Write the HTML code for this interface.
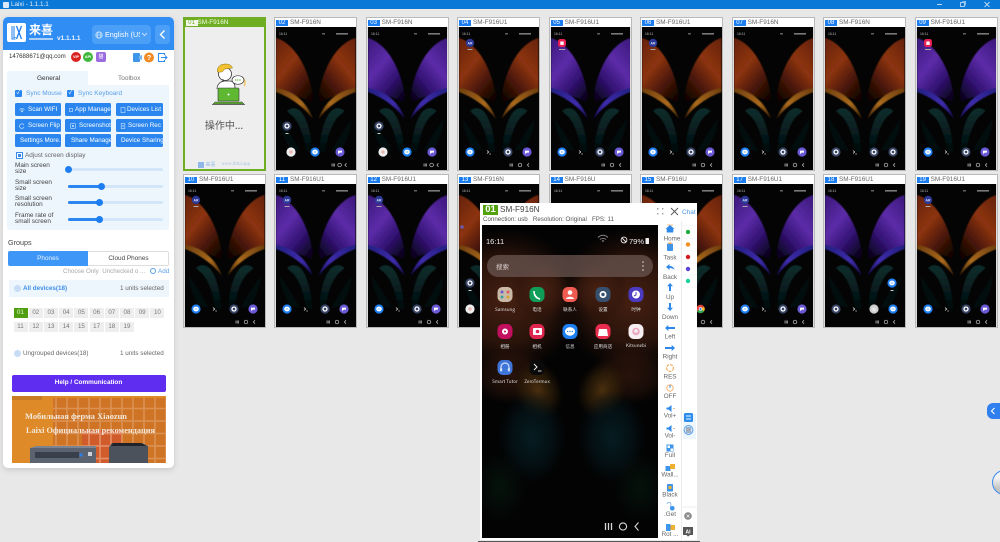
<!DOCTYPE html>
<html lang="en">
<head>
<meta charset="utf-8">
<title>Laixi - 1.1.1.1</title>
<style>
*{box-sizing:border-box;margin:0;padding:0}
html,body{width:1000px;height:542px;overflow:hidden;background:#e9e8e8;font-family:"Liberation Sans","Noto Sans CJK SC",sans-serif}
#root{position:relative;width:1000px;height:542px;overflow:hidden;filter:blur(.25px)}
.a{position:absolute;white-space:nowrap}
.card{position:absolute;width:83px;height:154px;background:#dedddd;border:1px solid #b9b9b9}
.card .h{position:absolute;left:0;top:0;right:0;height:9px;background:#fff;font-size:6.4px;line-height:9px;color:#666;padding-left:15px;white-space:nowrap}
.card .b{position:absolute;left:1px;top:2px;width:12px;height:6px;background:#1b7df0;color:#fff;font-size:6px;line-height:6px;text-align:center}
.card svg{position:absolute;left:1px;top:9px;width:79.5px;height:143px;background:#040404}
.btn{position:absolute;height:13px;background:#2a86ee;color:#fff;font-size:6.3px;line-height:13px;white-space:nowrap;overflow:hidden;border-radius:1.5px}
.btn svg{position:absolute;left:4px;top:3.5px;width:6px;height:6px}
.lb{position:absolute;left:15px;font-size:6.4px;line-height:6.4px;color:#444;width:48px}
.tr{position:absolute;left:68px;width:95px;height:3px;background:#d3e5f9;border-radius:2px}
.fi{position:absolute;left:68px;height:3px;background:#2a86ee;border-radius:2px}
.th{position:absolute;width:7px;height:7px;border-radius:50%;background:#1e7df0}
.ck{position:absolute;width:7px;height:7px;background:#2a86ee;border-radius:1px;color:#fff;font-size:6px;line-height:7px;text-align:center}
.n{position:absolute;width:14px;height:10px;background:#eee;color:#777;font-size:6.2px;line-height:10px;text-align:center}
</style>
</head>
<body>
<div id="root">

<svg width="0" height="0" style="position:absolute">
<defs>
<linearGradient id="lo" x1=".1" y1="0" x2=".8" y2="1"><stop offset="0" stop-color="#6a240c"/><stop offset=".4" stop-color="#8c3412"/><stop offset=".72" stop-color="#4c1808"/><stop offset="1" stop-color="#140502"/></linearGradient>
<linearGradient id="lp" x1=".1" y1="0" x2=".8" y2="1"><stop offset="0" stop-color="#3e1a80"/><stop offset=".4" stop-color="#5c2ca8"/><stop offset=".72" stop-color="#321272"/><stop offset="1" stop-color="#0c0420"/></linearGradient>
<linearGradient id="bo" x1="0" y1="0" x2="1" y2="1"><stop offset="0" stop-color="#6e3e0e"/><stop offset=".6" stop-color="#aa6a1c"/><stop offset="1" stop-color="#3a2006"/></linearGradient>
<linearGradient id="bp" x1="0" y1="0" x2="1" y2="1"><stop offset="0" stop-color="#221f80"/><stop offset=".6" stop-color="#3e2cac"/><stop offset="1" stop-color="#140c50"/></linearGradient>
<linearGradient id="te" x1="0" y1="0" x2="0" y2="1"><stop offset="0" stop-color="#0e2e2c"/><stop offset=".55" stop-color="#071c1e"/><stop offset="1" stop-color="#030707"/></linearGradient>
<filter id="s1" x="-5%" y="-5%" width="110%" height="110%"><feGaussianBlur stdDeviation=".45"/></filter>
<radialGradient id="gb"><stop offset="0" stop-color="#4a2212" stop-opacity=".95"/><stop offset=".6" stop-color="#3a1a0e" stop-opacity=".7"/><stop offset="1" stop-color="#2a120a" stop-opacity="0"/></radialGradient>
<radialGradient id="go"><stop offset="0" stop-color="#523410" stop-opacity=".9"/><stop offset=".6" stop-color="#38240a" stop-opacity=".55"/><stop offset="1" stop-color="#2a1a06" stop-opacity="0"/></radialGradient>
<radialGradient id="gt"><stop offset="0" stop-color="#062026" stop-opacity=".9"/><stop offset=".6" stop-color="#05181e" stop-opacity=".6"/><stop offset="1" stop-color="#04141a" stop-opacity="0"/></radialGradient>
<radialGradient id="gg"><stop offset="0" stop-color="#05180f" stop-opacity=".7"/><stop offset="1" stop-color="#061c12" stop-opacity="0"/></radialGradient>
<pattern id="tile" width="11" height="12.500" patternUnits="userSpaceOnUse"><rect width="11" height="12.500" fill="#dc9152"/><rect x=".8" y=".8" width="9.400" height="10.900" fill="#cf7424"/></pattern>
<pattern id="tile2" width="11" height="12.500" patternUnits="userSpaceOnUse"><rect width="11" height="12.500" fill="#e58f68"/><rect x=".8" y=".8" width="9.400" height="10.900" fill="#d05c2c"/></pattern>
<g id="lf-o"><path d="M0 11C12 14 30 30 37 68L35 75C25 70 10 66 0 61Z" fill="url(#lo)"/><path d="M0 61C14 63 30 72 37 92C28 80 14 70 0 65Z" fill="url(#bo)"/><path d="M11 84C15 80 22 80 26 86C32 94 36 110 36 126L30 124C28 108 22 92 14 87Z" fill="url(#te)"/><path d="M4 92C10 100 20 116 24 124L14 122C8 112 4 102 4 92Z" fill="#061a1a" opacity=".45"/></g>
<g id="lf-p"><path d="M0 11C12 14 30 30 37 68L35 75C25 70 10 66 0 61Z" fill="url(#lp)"/><path d="M0 61C14 63 30 72 37 92C28 80 14 70 0 65Z" fill="url(#bp)"/><path d="M11 84C15 80 22 80 26 86C32 94 36 110 36 126L30 124C28 108 22 92 14 87Z" fill="url(#te)"/><path d="M4 92C10 100 20 116 24 124L14 122C8 112 4 102 4 92Z" fill="#061a1a" opacity=".45"/></g>
<g id="wo" filter="url(#s1)"><use href="#lf-o"/><use href="#lf-o" transform="translate(79.5 0) scale(-1 1)"/></g>
<g id="wp" filter="url(#s1)"><use href="#lf-p"/><use href="#lf-p" transform="translate(79.5 0) scale(-1 1)"/></g>
<g id="st"><text x="3" y="8" font-size="3.400" fill="#bbb" font-family="Liberation Sans">16:11</text><rect x="46" y="6.200" width="3" height="1.200" fill="#777"/><rect x="60" y="6" width="12" height="1.600" fill="#aaa" opacity=".7"/></g>
<g id="nv"><path d="M51 136.500v3M52.200 136.500v3M53.400 136.500v3" stroke="#bbb" stroke-width=".7"/><circle cx="61" cy="138" r="1.800" fill="none" stroke="#ccc" stroke-width=".7"/><path d="M70 136.300l-1.600 1.700 1.600 1.700" fill="none" stroke="#ccc" stroke-width=".7"/></g>
<g id="nw"><path d="M56 136.500v3M57.200 136.500v3M58.400 136.500v3" stroke="#bbb" stroke-width=".7"/><circle cx="63.600" cy="138" r="1.800" fill="none" stroke="#ccc" stroke-width=".7"/><path d="M70.500 136.300l-1.600 1.700 1.600 1.700" fill="none" stroke="#ccc" stroke-width=".7"/></g>
<g id="ib"><circle r="4.600" fill="#1d7ff2"/><ellipse rx="2.800" ry="2.400" fill="#fff"/><path d="M-1.300 0h2.600" stroke="#1d7ff2" stroke-width=".6"/></g>
<g id="is"><circle r="4.600" fill="#3a4668"/><circle r="2" fill="none" stroke="#fff" stroke-width="1.300"/></g>
<g id="ip"><circle r="4.600" fill="#6b5ad6"/><path d="M-2 -1.400h4v2h-2l-2 1.400z" fill="#fff"/></g>
<g id="iw"><circle r="4.600" fill="#eee"/><circle r="1.700" fill="#e9b7b0"/></g>
<g id="ig"><circle r="4.600" fill="#cfcfcf"/><circle r="2" cy=".5" fill="#e4e4e4"/></g>
<g id="it"><path d="M-2 -1.500l1.700 1.500-1.700 1.500" fill="none" stroke="#ddd" stroke-width=".8"/><path d="M.3 2h1.600" stroke="#ddd" stroke-width=".7"/></g>
<g id="ir"><rect x="-4" y="-4" width="8" height="8" rx="2.400" fill="#e81f55"/><rect x="-1.700" y="-1.500" width="3.400" height="3.400" fill="#fff"/><rect x="-3" y="6" width="6" height="1" fill="#aaa"/></g>
<g id="ia"><circle r="4.200" fill="#2a3795"/><text y="1.300" text-anchor="middle" font-size="3.400" font-weight="bold" fill="#d8def8" font-family="Liberation Sans">AR</text><rect x="-2.500" y="6" width="5" height="1" fill="#aaa"/></g>
<g id="il"><rect x="-1.500" y="6" width="3" height="1" fill="#ccc"/></g>
<g id="ic"><circle r="4.200" fill="#e8453c"/><path d="M0 0L-3.600 2.100A4.200 4.200 0 0 0 3.600 2.100Z" fill="#2ea84f"/><path d="M0 0L3.600 2.100A4.200 4.200 0 0 0 3.600 -2.100Z" fill="#f5c11a"/><circle r="1.700" fill="#fff"/><circle r="1.100" fill="#3b82f0"/></g>
</defs>
</svg>

<!-- title bar -->
<div class="a" style="left:0;top:0;width:1000px;height:9px;background:#0a78d6"></div>
<div class="a" style="left:3px;top:1.500px;width:6px;height:6px;background:#dbeafb;border-radius:1px"></div>
<div class="a" style="left:11px;top:1px;font-size:6.300px;line-height:8px;color:#e8f2fc">Laixi - 1.1.1.1</div>
<svg class="a" style="left:930px;top:0" width="70" height="9"><path d="M7 4.500h5" stroke="#e6f0fb" stroke-width=".8"/><rect x="30.500" y="2.500" width="4" height="4" fill="none" stroke="#e6f0fb" stroke-width=".7"/><path d="M32 1.500h3.700v3.700" fill="none" stroke="#e6f0fb" stroke-width=".6"/><path d="M54.500 2l5 5M59.500 2l-5 5" stroke="#e6f0fb" stroke-width=".8"/></svg>

<!-- cards row 1 -->
<div class="card" style="left:182.500px;top:17px;border:2px solid #6fae22;background:#eeeeee">
  <div class="h" style="background:#6fae22;left:-1px;right:-1px;top:-1px;height:9px;color:#f4fbe8;padding-left:14px">SM-F916N</div>
  <div class="b" style="left:1px;top:1px;background:#f2f7ea;color:#6fae22;">01</div>
  <svg style="left:22px;top:40px;width:40px;height:50px;background:none" viewBox="0 0 40 50">
    <path d="M10 30c0-5 4-8 8-8h5c3 0 5 3 5 6v3" fill="#fff" stroke="#333" stroke-width=".8"/>
    <circle cx="18" cy="15" r="6.500" fill="#fff" stroke="#333" stroke-width=".8"/>
    <path d="M10.500 13c-1-5 3-8 8-8 3 0 6 1 7 4-3 0-5 1-8 1-1 2-2 3-4 3-1 0-2 .5-3 0z" fill="#f2c230" stroke="#8a6a10" stroke-width=".5"/>
    <path d="M16 20v3" stroke="#333" stroke-width=".8"/>
    <rect x="11" y="29" width="21" height="13" rx="1" fill="#5fb832" stroke="#333" stroke-width=".6"/>
    <path d="M8 43h27l2 2H6z" fill="#5fb832" stroke="#333" stroke-width=".5"/>
    <path d="M5 45.500h33" stroke="#444" stroke-width=".8"/>
    <circle cx="21.500" cy="35.500" r="1" fill="#fff"/>
    <path d="M37 27c2-3 1-7-2-8" fill="none" stroke="#f2c96a" stroke-width="1.600"/>
    <ellipse cx="31" cy="21" rx="6" ry="4.300" fill="#fff" stroke="#333" stroke-width=".7"/>
    <path d="M28 21h6" stroke="#58b030" stroke-width="1.200" stroke-dasharray="1 .8"/>
  </svg>
  <div class="a" style="left:0;width:79px;top:99px;text-align:center;font-size:10px;line-height:13px;color:#555;font-family:'Noto Sans CJK SC','Liberation Sans',sans-serif">操作中...</div>
  <div class="a" style="left:13px;top:143px;width:6px;height:6px;background:#8fb8e8"></div>
  <div class="a" style="left:21px;top:143px;font-size:5px;line-height:6px;color:#8fb8e8">来喜</div>
  <div class="a" style="left:37px;top:143px;font-size:4.800px;line-height:6px;color:#a9c3e4;font-family:'Liberation Serif',serif">www.lbfol.app</div>
</div>

<div class="card" style="left:274px;top:17px"><div class="h">SM-F916N</div><div class="b">02</div><svg viewBox="0 0 79.5 143"><use href="#wo"/><use href="#st"/><use href="#is" x="11" y="99"/><use href="#il" x="11" y="100"/><use href="#iw" x="15" y="125"/><use href="#ib" x="39" y="125"/><use href="#ip" x="64" y="125"/><use href="#nw"/></svg></div>
<div class="card" style="left:365.600px;top:17px"><div class="h">SM-F916N</div><div class="b">03</div><svg viewBox="0 0 79.5 143"><use href="#wp"/><use href="#st"/><use href="#is" x="11" y="99"/><use href="#il" x="11" y="100"/><use href="#iw" x="15" y="125"/><use href="#ib" x="39" y="125"/><use href="#ip" x="64" y="125"/><use href="#nw"/></svg></div>
<div class="card" style="left:457px;top:17px"><div class="h">SM-F916U1</div><div class="b">04</div><svg viewBox="0 0 79.5 143"><use href="#wo"/><use href="#st"/><use href="#ia" x="11" y="16"/><use href="#ib" x="11" y="125"/><use href="#it" x="30" y="125"/><use href="#is" x="49" y="125"/><use href="#ip" x="68" y="125"/><use href="#nv"/></svg></div>
<div class="card" style="left:548.600px;top:17px"><div class="h">SM-F916U1</div><div class="b">05</div><svg viewBox="0 0 79.5 143"><use href="#wp"/><use href="#st"/><use href="#ir" x="11" y="16"/><use href="#ib" x="11" y="125"/><use href="#it" x="30" y="125"/><use href="#is" x="49" y="125"/><use href="#ip" x="68" y="125"/><use href="#nv"/></svg></div>
<div class="card" style="left:640px;top:17px"><div class="h">SM-F916U1</div><div class="b">06</div><svg viewBox="0 0 79.5 143"><use href="#wo"/><use href="#st"/><use href="#ia" x="11" y="16"/><use href="#ib" x="11" y="125"/><use href="#it" x="30" y="125"/><use href="#is" x="49" y="125"/><use href="#ip" x="68" y="125"/><use href="#nv"/></svg></div>
<div class="card" style="left:731.600px;top:17px"><div class="h">SM-F916N</div><div class="b">07</div><svg viewBox="0 0 79.5 143"><use href="#wo"/><use href="#st"/><use href="#ib" x="11" y="125"/><use href="#it" x="30" y="125"/><use href="#is" x="49" y="125"/><use href="#ip" x="68" y="125"/><use href="#nv"/></svg></div>
<div class="card" style="left:823px;top:17px"><div class="h">SM-F916N</div><div class="b">08</div><svg viewBox="0 0 79.5 143"><use href="#wo"/><use href="#st"/><use href="#is" x="11" y="125"/><use href="#it" x="30" y="125"/><use href="#is" x="49" y="125"/><use href="#is" x="68" y="125"/><use href="#nv"/></svg></div>
<div class="card" style="left:914.600px;top:17px"><div class="h">SM-F916U1</div><div class="b">09</div><svg viewBox="0 0 79.5 143"><use href="#wp"/><use href="#st"/><use href="#ir" x="11" y="16"/><use href="#ib" x="11" y="125"/><use href="#it" x="30" y="125"/><use href="#is" x="49" y="125"/><use href="#ip" x="68" y="125"/><use href="#nv"/></svg></div>

<!-- cards row 2 -->
<div class="card" style="left:183px;top:174px"><div class="h">SM-F916U1</div><div class="b">10</div><svg viewBox="0 0 79.5 143"><use href="#wo"/><use href="#st"/><use href="#ia" x="11" y="16"/><use href="#ib" x="11" y="125"/><use href="#it" x="30" y="125"/><use href="#is" x="49" y="125"/><use href="#ip" x="68" y="125"/><use href="#nv"/></svg></div>
<div class="card" style="left:274px;top:174px"><div class="h">SM-F916U1</div><div class="b">11</div><svg viewBox="0 0 79.5 143"><use href="#wp"/><use href="#st"/><use href="#ia" x="11" y="16"/><use href="#ib" x="11" y="125"/><use href="#it" x="30" y="125"/><use href="#is" x="49" y="125"/><use href="#ip" x="68" y="125"/><use href="#nv"/></svg></div>
<div class="card" style="left:365.600px;top:174px"><div class="h">SM-F916U1</div><div class="b">12</div><svg viewBox="0 0 79.5 143"><use href="#wp"/><use href="#st"/><use href="#ia" x="11" y="16"/><use href="#ib" x="11" y="125"/><use href="#it" x="30" y="125"/><use href="#is" x="49" y="125"/><use href="#ip" x="68" y="125"/><use href="#nv"/></svg></div>
<div class="card" style="left:457px;top:174px"><div class="h">SM-F916N</div><div class="b">13</div><svg viewBox="0 0 79.5 143"><use href="#wo"/><use href="#st"/><circle cx="3" cy="43" r="1.800" fill="#6a5ab0"/><use href="#is" x="11" y="99"/><use href="#il" x="11" y="100"/><use href="#iw" x="11" y="125"/></svg></div>
<div class="card" style="left:548.600px;top:174px"><div class="h">SM-F916U</div><div class="b">14</div><svg viewBox="0 0 79.5 143"><use href="#st"/></svg></div>
<div class="card" style="left:640px;top:174px"><div class="h">SM-F916U</div><div class="b">15</div><svg viewBox="0 0 79.5 143"><use href="#wo"/><use href="#st"/><use href="#ic" x="58.500" y="125"/><use href="#nv"/></svg></div>
<div class="card" style="left:731.600px;top:174px"><div class="h">SM-F916U1</div><div class="b">17</div><svg viewBox="0 0 79.5 143"><use href="#wp"/><use href="#st"/><use href="#ia" x="11" y="16"/><use href="#ib" x="11" y="125"/><use href="#it" x="30" y="125"/><use href="#is" x="49" y="125"/><use href="#ip" x="68" y="125"/><use href="#nv"/></svg></div>
<div class="card" style="left:823px;top:174px"><div class="h">SM-F916U1</div><div class="b">18</div><svg viewBox="0 0 79.5 143"><use href="#wp"/><use href="#st"/><use href="#ib" x="67" y="99"/><use href="#il" x="67" y="100"/><use href="#is" x="11" y="125"/><use href="#it" x="30" y="125"/><use href="#ig" x="49" y="125"/><use href="#ib" x="68" y="125"/><use href="#nv"/></svg></div>
<div class="card" style="left:914.600px;top:174px"><div class="h">SM-F916U1</div><div class="b">19</div><svg viewBox="0 0 79.5 143"><use href="#wo"/><use href="#st"/><use href="#ia" x="11" y="16"/><use href="#ib" x="11" y="125"/><use href="#it" x="30" y="125"/><use href="#is" x="49" y="125"/><use href="#ip" x="68" y="125"/><use href="#nv"/></svg></div>

<!-- sidebar -->
<div class="a" style="left:3px;top:17px;width:171px;height:451px;background:#fff;border-radius:5px;box-shadow:0 2px 6px rgba(120,120,130,.28)"></div>
<div class="a" style="left:3px;top:17px;width:171px;height:33px;background:#2f8df4;border-radius:5px 5px 0 0"></div>
<div class="a" style="left:7px;top:23px;width:19px;height:19px;background:#fff;border-radius:2px"></div>
<svg class="a" style="left:7px;top:23px" width="19" height="19" viewBox="0 0 19 19"><path d="M5 3v13h3.500M7 3v11.500h1.500" fill="none" stroke="#1f7fe8" stroke-width="1"/><path d="M9.500 3l5 13M14.500 3l-5 13" fill="none" stroke="#1f7fe8" stroke-width="1.300"/></svg>
<div class="a" style="left:29px;top:23px;font-size:12px;line-height:14px;font-weight:bold;color:#fff;font-family:'Noto Sans CJK SC',sans-serif">来喜</div>
<div class="a" style="left:29px;top:38px;width:24px;height:1.500px;background:#a9d0fa"></div>
<div class="a" style="left:57px;top:35px;font-size:6.500px;line-height:8px;color:#eaf4ff;font-weight:bold">v1.1.1.1</div>
<div class="a" style="left:92px;top:25px;width:59px;height:19px;background:#4b9ff6;border-radius:4px"></div>
<svg class="a" style="left:95px;top:31px" width="8" height="8" viewBox="0 0 8 8"><circle cx="4" cy="4" r="3.200" fill="none" stroke="#dcecff" stroke-width=".7"/><ellipse cx="4" cy="4" rx="1.400" ry="3.200" fill="none" stroke="#dcecff" stroke-width=".6"/><path d="M1 4h6" stroke="#dcecff" stroke-width=".6"/></svg>
<div class="a" style="left:105px;top:30px;width:35px;overflow:hidden;font-size:7.200px;line-height:10px;color:#fff">English (US)</div>
<svg class="a" style="left:141px;top:32px" width="7" height="5"><path d="M1 1l2.500 2.500L6 1" fill="none" stroke="#dcecff" stroke-width=".8"/></svg>
<div class="a" style="left:155px;top:25px;width:15px;height:19px;background:#4b9ff6;border-radius:3px"></div>
<svg class="a" style="left:158px;top:29px" width="9" height="11"><path d="M6.500 1.500L2.500 5.500l4 4" fill="none" stroke="#fff" stroke-width="1.400"/></svg>

<div class="a" style="left:9px;top:53px;font-size:6.100px;line-height:8px;color:#333">147688671@qq.com</div>
<div class="a" style="left:71px;top:52px;width:10px;height:10px;border-radius:50%;background:#d9231f;color:#fff;font-size:3.800px;line-height:10px;text-align:center;font-weight:bold">VIP</div>
<div class="a" style="left:83px;top:52px;width:10px;height:10px;border-radius:50%;background:#3eb83a;color:#fff;font-size:3.800px;line-height:10px;text-align:center;font-weight:bold">API</div>
<div class="a" style="left:96px;top:52px;width:10px;height:10px;border-radius:2px;background:#9a6ce0;color:#fff;font-size:5px;line-height:10px;text-align:center">猫</div>
<svg class="a" style="left:131px;top:52px" width="38" height="11" viewBox="0 0 38 11"><rect x="2" y="1" width="7" height="9" rx="1" fill="#3f95ea"/><path d="M8 4l3-1v5l-3-1z" fill="#7ab8f2"/><circle cx="18" cy="5.500" r="5" fill="#f28a23"/><text x="18" y="8.200" font-size="7.500" font-weight="bold" text-anchor="middle" fill="#fff" font-family="Liberation Sans">?</text><path d="M33.500 3V1.500h-6v8h6V8" fill="none" stroke="#2f8bec" stroke-width="1.100"/><path d="M30 5.500h6M34 3.500l2 2-2 2" fill="none" stroke="#2f8bec" stroke-width="1"/></svg>

<!-- tabs -->
<div class="a" style="left:7px;top:71px;width:162px;height:159px;background:#edf5fd;border-radius:3px"></div>
<div class="a" style="left:88px;top:71px;width:81px;height:14px;background:#fff"></div>
<div class="a" style="left:37px;top:74px;font-size:6.500px;line-height:9px;color:#333">General</div>
<div class="a" style="left:118px;top:74px;font-size:6.500px;line-height:9px;color:#777">Toolbox</div>

<div class="ck" style="left:15px;top:90px">✓</div>
<div class="a" style="left:26px;top:89px;font-size:6.500px;line-height:9px;color:#5aa0e8">Sync Mouse</div>
<div class="ck" style="left:67px;top:90px">✓</div>
<div class="a" style="left:78px;top:89px;font-size:6.500px;line-height:9px;color:#5aa0e8">Sync Keyboard</div>

<div class="btn" style="left:15px;top:103px;width:46px;padding-left:13px"><svg viewBox="0 0 6 6"><path d="M.5 2.500c1.500-1.500 3.500-1.500 5 0M1.500 3.500c1-1 2-1 3 0M3 5l.7-.8H2.300z" fill="none" stroke="#cfe4fb" stroke-width=".6"/></svg>Scan WIFI</div>
<div class="btn" style="left:65px;top:103px;width:46px;padding-left:10px"><svg viewBox="0 0 6 6" style="left:3px"><rect x="1.500" y="1.500" width="3" height="3" fill="none" stroke="#cfe4fb" stroke-width=".6"/></svg>App Manage</div>
<div class="btn" style="left:116px;top:103px;width:47px;padding-left:11px"><svg viewBox="0 0 6 6"><rect x="1" y=".5" width="4" height="5" fill="none" stroke="#cfe4fb" stroke-width=".6"/></svg>Devices List</div>
<div class="btn" style="left:15px;top:119px;width:46px;padding-left:13px"><svg viewBox="0 0 6 6"><path d="M4.800 2A2.300 2.300 0 1 0 5 3.800" fill="none" stroke="#cfe4fb" stroke-width=".7"/></svg>Screen Flip</div>
<div class="btn" style="left:65px;top:119px;width:46px;padding-left:14px"><svg viewBox="0 0 6 6" style="left:5px"><rect x=".7" y=".7" width="4.600" height="4.600" fill="none" stroke="#cfe4fb" stroke-width=".6"/><circle cx="3" cy="3" r="1" fill="#cfe4fb"/></svg>Screenshot</div>
<div class="btn" style="left:116px;top:119px;width:47px;padding-left:12px"><svg viewBox="0 0 6 6"><rect x="1.200" y=".5" width="3.600" height="5" fill="none" stroke="#cfe4fb" stroke-width=".6"/><rect x="2.400" y="2.300" width="1.200" height="1.400" fill="#cfe4fb"/></svg>Screen Rec</div>
<div class="btn" style="left:15px;top:134px;width:46px;padding-left:5px">Settings More..</div>
<div class="btn" style="left:65px;top:134px;width:46px;padding-left:6px">Share Manage</div>
<div class="btn" style="left:116px;top:134px;width:47px;padding-left:5px">Device Sharing</div>

<div class="a" style="left:16px;top:152px;width:7px;height:7px;border:1px solid #3a8be8;background:#fff"></div>
<div class="a" style="left:18px;top:154px;width:3px;height:3px;background:#3a8be8"></div>
<div class="a" style="left:25px;top:151px;font-size:6.400px;line-height:9px;color:#666">Adjust screen display</div>

<div class="lb" style="top:163px">Main screen<br>size</div>
<div class="lb" style="top:180px">Small screen<br>size</div>
<div class="lb" style="top:196px">Small screen<br>resolution</div>
<div class="lb" style="top:213px">Frame rate of<br>small screen</div>
<div class="tr" style="top:168px"></div><div class="th" style="left:64.500px;top:166px"></div>
<div class="tr" style="top:185px"></div><div class="fi" style="top:185px;width:33px"></div><div class="th" style="left:98px;top:183px"></div>
<div class="tr" style="top:201px"></div><div class="fi" style="top:201px;width:31px"></div><div class="th" style="left:96px;top:199px"></div>
<div class="tr" style="top:218px"></div><div class="fi" style="top:218px;width:31px"></div><div class="th" style="left:96px;top:216px"></div>

<div class="a" style="left:8px;top:238px;font-size:7.200px;line-height:10px;color:#444">Groups</div>
<div class="a" style="left:8px;top:251px;width:161px;height:15px;border:1px solid #ddd;border-radius:2px;background:#fff"></div>
<div class="a" style="left:8px;top:251px;width:80px;height:15px;background:#3e96f7;border-radius:2px 0 0 2px;color:#eaf4ff;font-size:6.400px;line-height:15px;text-align:center">Phones</div>
<div class="a" style="left:88px;top:251px;width:81px;height:15px;color:#444;font-size:6.400px;line-height:15px;text-align:center">Cloud Phones</div>
<div class="a" style="left:63px;top:267px;font-size:6.200px;line-height:9px;color:#a8a8a8">Choose Only&nbsp; Unchecked o ...</div>
<div class="a" style="left:150px;top:268px;width:6px;height:6px;border:.7px solid #5a9fe8;border-radius:50%"></div>
<div class="a" style="left:158px;top:267px;font-size:6.400px;line-height:9px;color:#5a9fe8">Add</div>

<div class="a" style="left:9px;top:280px;width:160px;height:17px;background:#eef6fd"></div>
<div class="a" style="left:14px;top:285px;width:7px;height:7px;border-radius:50%;background:#c8dcf6"></div>
<div class="a" style="left:23px;top:284px;font-size:6.300px;line-height:9px;color:#3f8ee8;font-weight:bold">All devices(18)</div>
<div class="a" style="left:120px;top:284px;font-size:6.300px;line-height:9px;color:#666">1 units selected</div>

<div class="n" style="left:13.500px;top:308px;background:#4f9e10;color:#eaf6d8">01</div>
<div class="n" style="left:28.800px;top:308px">02</div>
<div class="n" style="left:44px;top:308px">03</div>
<div class="n" style="left:59.200px;top:308px">04</div>
<div class="n" style="left:74.400px;top:308px">05</div>
<div class="n" style="left:89.600px;top:308px">06</div>
<div class="n" style="left:104.800px;top:308px">07</div>
<div class="n" style="left:120px;top:308px">08</div>
<div class="n" style="left:135.200px;top:308px">09</div>
<div class="n" style="left:150.400px;top:308px">10</div>
<div class="n" style="left:13.500px;top:322px">11</div>
<div class="n" style="left:28.800px;top:322px">12</div>
<div class="n" style="left:44px;top:322px">13</div>
<div class="n" style="left:59.200px;top:322px">14</div>
<div class="n" style="left:74.400px;top:322px">15</div>
<div class="n" style="left:89.600px;top:322px">17</div>
<div class="n" style="left:104.800px;top:322px">18</div>
<div class="n" style="left:120px;top:322px">19</div>

<div class="a" style="left:14px;top:350px;width:7px;height:7px;border-radius:50%;background:#c8dcf6"></div>
<div class="a" style="left:23px;top:349px;font-size:6.300px;line-height:9px;color:#666">Ungrouped devices(18)</div>
<div class="a" style="left:120px;top:349px;font-size:6.300px;line-height:9px;color:#666">1 units selected</div>

<div class="a" style="left:11.500px;top:375px;width:154px;height:16.500px;background:#5f2df0;border-radius:2px;color:#fff;font-size:6.400px;font-weight:bold;line-height:16.500px;text-align:center">Help / Communication</div>

<svg class="a" style="left:11.500px;top:396px" width="154" height="67" viewBox="0 0 154 67">
<rect width="154" height="67" fill="#de8a28"/>
<rect x="0" y="0" width="30" height="4" fill="#c87a24"/>
<rect x="41" y="2" width="113" height="65" fill="url(#tile)"/>
<rect x="70" y="34" width="40" height="33" fill="url(#tile2)"/>
<path d="M18 52h66v15H18z" fill="#5c6370"/><path d="M18 52l6-2h60v2z" fill="#7c8390"/><rect x="23" y="56" width="44" height="6" fill="#39404c"/><circle cx="69" cy="59" r="1.600" fill="#2a7fe8"/><rect x="76" y="56" width="4" height="4" fill="#cdd2da"/>
<path d="M97 51l3-4h30l6 3v17H97z" fill="#4c525c"/><path d="M99 50l2-3h28l5 3z" fill="#20242a"/>
<text x="13" y="23" textLength="102" lengthAdjust="spacingAndGlyphs" font-size="8.200" font-weight="bold" fill="#f2e8dc" font-family="Liberation Serif">Мобильная ферма Xiaozun</text>
<text x="14" y="37" textLength="129" lengthAdjust="spacingAndGlyphs" font-size="8.200" font-weight="bold" fill="#f2e8dc" font-family="Liberation Serif">Laixi Официальная рекомендация</text>
</svg>

<!-- control window -->
<div class="a" style="left:480px;top:203px;width:217px;height:337px;background:#fff"></div>
<div class="a" style="left:483px;top:205px;width:15px;height:10px;background:#52a10f;color:#fff;font-size:9.500px;font-weight:bold;line-height:10px;text-align:center">01</div>
<div class="a" style="left:500px;top:204px;font-size:8.200px;line-height:12px;color:#444">SM-F916N</div>
<div class="a" style="left:483px;top:216px;font-size:6.200px;line-height:8px;color:#555">Connection: usb&nbsp;&nbsp; Resolution: Original&nbsp;&nbsp; FPS: 11</div>
<svg class="a" style="left:655px;top:205px" width="26" height="14"><g fill="#999"><rect x="2" y="3" width="1.400" height="1.400"/><rect x="7" y="3" width="1.400" height="1.400"/><rect x="2" y="8" width="1.400" height="1.400"/><rect x="7" y="8" width="1.400" height="1.400"/></g><path d="M16 3l7 7M23 3l-7 7" stroke="#555" stroke-width=".9"/></svg>
<div class="a" style="left:682px;top:208px;width:15px;overflow:hidden;font-size:6.500px;line-height:9px;color:#4c95e4">Chat</div>
<div class="a" style="left:681px;top:221px;width:1px;height:319px;background:#ececec"></div>

<!-- phone screen -->
<svg class="a" style="left:482px;top:225px" width="176" height="313" viewBox="0 0 176 313">
<rect width="176" height="313" fill="#030303"/>
<ellipse cx="25" cy="75" rx="75" ry="72" fill="url(#gb)"/>
<ellipse cx="151" cy="75" rx="75" ry="72" fill="url(#gb)"/>
<ellipse cx="60" cy="65" rx="30" ry="30" fill="url(#gb)"/>
<ellipse cx="116" cy="65" rx="30" ry="30" fill="url(#gb)"/>
<ellipse cx="28" cy="150" rx="40" ry="30" fill="url(#gb)" opacity=".55"/>
<ellipse cx="148" cy="150" rx="40" ry="30" fill="url(#gb)" opacity=".55"/>
<ellipse cx="56" cy="165" rx="24" ry="30" fill="url(#go)" transform="rotate(-25 56 165)"/>
<ellipse cx="120" cy="165" rx="24" ry="30" fill="url(#go)" transform="rotate(25 120 165)"/>
<ellipse cx="50" cy="212" rx="34" ry="46" fill="url(#gt)"/>
<ellipse cx="130" cy="212" rx="34" ry="46" fill="url(#gt)"/>
<ellipse cx="18" cy="262" rx="26" ry="34" fill="url(#gg)"/>
<ellipse cx="158" cy="262" rx="26" ry="34" fill="url(#gg)"/>
<text x="4" y="19" font-size="7.500" fill="#eee" font-family="Liberation Sans">16:11</text>
<path d="M116 12.500c3-3 7-3 10 0M118 14.500c2-1.600 4-1.600 6 0M120 16.500l1-1 1 1" fill="none" stroke="#888" stroke-width=".9"/>
<circle cx="142" cy="15" r="2.900" fill="none" stroke="#eee" stroke-width=".9"/><path d="M140 13l4 4" stroke="#eee" stroke-width=".9"/>
<text x="147" y="19" font-size="7.500" fill="#eee" font-family="Liberation Sans">79%</text>
<rect x="163.500" y="13" width="3.500" height="6" rx=".6" fill="#eee"/>
<rect x="5" y="30" width="166" height="22" rx="11" fill="#6b5550" opacity=".75"/>
<text x="14" y="44" font-size="6.500" fill="#d8cfcc" font-family="Noto Sans CJK SC">搜索</text>
<g fill="#ddd"><circle cx="161" cy="37" r=".8"/><circle cx="161" cy="41" r=".8"/><circle cx="161" cy="45" r=".8"/></g>
<!-- row 1 -->
<rect x="15.500" y="62" width="15" height="15" rx="5" fill="#c9b9a6"/><circle cx="20" cy="67" r="1.500" fill="#6b5ad6"/><circle cx="26" cy="67" r="1.500" fill="#e05a5a"/><circle cx="20" cy="72" r="1.500" fill="#3aa0a0"/><circle cx="26" cy="72" r="1.500" fill="#e0a030"/>
<rect x="47.500" y="62" width="15" height="15" rx="5.500" fill="#0f9d58"/><path d="M52 66c0 4 2 7 6 8" fill="none" stroke="#fff" stroke-width="1.600"/>
<rect x="80.500" y="62" width="15" height="15" rx="5.500" fill="#ef5b50"/><circle cx="88" cy="67.500" r="2.300" fill="#fff"/><path d="M84 74c0-3 8-3 8 0z" fill="#fff"/>
<rect x="113.500" y="62" width="15" height="15" rx="5.500" fill="#37506e"/><circle cx="121" cy="69.500" r="2.600" fill="none" stroke="#fff" stroke-width="1.800"/>
<rect x="146.500" y="62" width="15" height="15" rx="5.500" fill="#4a3bc0"/><circle cx="154" cy="69.500" r="4" fill="#fff"/><path d="M154 67v3l-2 1" stroke="#4a3bc0" stroke-width="1" fill="none"/>
<g font-family="Noto Sans CJK SC,Liberation Sans" font-size="4.600" fill="#ddd" text-anchor="middle">
<text x="23" y="86">Samsung</text><text x="55" y="86">电话</text><text x="88" y="86">联系人</text><text x="121" y="86">设置</text><text x="154" y="86">时钟</text>
<text x="23" y="123">相册</text><text x="55" y="123">相机</text><text x="88" y="123">信息</text><text x="121" y="123">应用商店</text><text x="154" y="122">Kitsunebi</text>
<text x="23" y="158">Smart Tutor</text><text x="55" y="158">ZeroTermux</text></g>
<!-- row 2 -->
<rect x="15.500" y="99" width="15" height="15" rx="5.500" fill="#c2105e"/><circle cx="23" cy="106.500" r="3" fill="#fff"/><circle cx="23" cy="106.500" r="1" fill="#c2105e"/>
<rect x="47.500" y="99" width="15" height="15" rx="5.500" fill="#e0264f"/><rect x="51" y="103" width="9" height="7" rx="1" fill="#fff"/><circle cx="55.500" cy="106.500" r="1.800" fill="#e0264f"/>
<rect x="80.500" y="99" width="15" height="15" rx="5.500" fill="#1d7ff2"/><ellipse cx="88" cy="106.500" rx="5" ry="4.200" fill="#fff"/><g fill="#1d7ff2"><circle cx="85.700" cy="106.500" r=".7"/><circle cx="88" cy="106.500" r=".7"/><circle cx="90.300" cy="106.500" r=".7"/></g>
<rect x="113.500" y="99" width="15" height="15" rx="5.500" fill="#ea2d4f"/><path d="M117 104h8l1 7h-10z" fill="#fff"/>
<rect x="146.500" y="99" width="15" height="15" rx="5.500" fill="#f6eef0"/><circle cx="154" cy="106.500" r="3.800" fill="#e8a8c0"/><circle cx="154" cy="106" r="1.800" fill="#f6eef0"/>
<!-- row 3 -->
<rect x="15.500" y="135" width="15" height="15" rx="5.500" fill="#3f74d8"/><path d="M19 144v-2a4 4 0 0 1 8 0v2" fill="none" stroke="#cfe0fa" stroke-width="1.200"/><rect x="18" y="143" width="2.200" height="3.500" rx="1" fill="#cfe0fa"/><rect x="25.800" y="143" width="2.200" height="3.500" rx="1" fill="#cfe0fa"/>
<rect x="47.500" y="135" width="15" height="15" rx="5.500" fill="#0a0a0a"/><path d="M52 139l3 3-3 3" fill="none" stroke="#eee" stroke-width="1"/><path d="M56 146h3.500" stroke="#eee" stroke-width=".9"/>
<!-- nav -->
<path d="M123.500 298v7M126.500 298v7M129.500 298v7" stroke="#d8d8d8" stroke-width="1.300"/>
<circle cx="141" cy="301.500" r="3.600" fill="none" stroke="#d8d8d8" stroke-width="1.100"/>
<path d="M156.500 297.500l-3.500 4 3.500 4" fill="none" stroke="#d8d8d8" stroke-width="1.100"/>
</svg>

<!-- toolbar -->
<svg class="a" style="left:658px;top:222px" width="24" height="318" viewBox="0 0 24 318">
<path d="M12 3l-4.500 4h1.200v3.500h6.600V7h1.200z" fill="#2d88ea"/><path d="M9 3h6" stroke="#f09a3a" stroke-width=".6"/>
<rect x="9" y="21.500" width="6" height="7.500" rx=".7" fill="#3f95ea"/><rect x="10.500" y="20.500" width="3" height="1.600" fill="#f0a24a"/>
<path d="M8 45l3.500-3v2c3 0 4.500 1.500 5 4-1.200-1.500-2.800-2-5-2v2z" fill="#2d88ea"/>
<path d="M12 61l-3 3.300h2V69h2v-4.700h2z" fill="#2d88ea"/>
<path d="M12 89l-3-3.300h2V81h2v4.700h2z" fill="#2d88ea"/>
<path d="M7 106l3.300-3v2H17v2h-6.700v2z" fill="#2d88ea"/>
<path d="M17 126l-3.300-3v2H7v2h6.700v2z" fill="#2d88ea"/>
<circle cx="12" cy="146" r="3.400" fill="none" stroke="#f0a24a" stroke-width="1" stroke-dasharray="3 1"/>
<circle cx="12" cy="166" r="3.200" fill="none" stroke="#f0a24a" stroke-width=".8"/><path d="M12 163v3" stroke="#2d88ea" stroke-width=".9"/>
<path d="M8.500 185.500h2l3-2.500v7l-3-2.500h-2z" fill="#2d88ea"/><path d="M15 186.500h2" stroke="#f0a24a" stroke-width=".7"/>
<path d="M8.500 205.500h2l3-2.500v7l-3-2.500h-2z" fill="#2d88ea"/><path d="M15 206.500h2" stroke="#f0a24a" stroke-width=".7"/>
<rect x="8.500" y="222.500" width="7" height="7" fill="#3f95ea"/><path d="M9.500 223.500h2.500v2.500h-2.500zM12.500 226.500H15V229h-2.500z" fill="#fff"/>
<rect x="7.500" y="244" width="5" height="5" fill="#3f95ea"/><rect x="12" y="242" width="5" height="5" fill="#f0b030"/>
<rect x="9" y="262" width="6" height="7.500" rx=".8" fill="#3f95ea"/><rect x="10.500" y="264" width="3" height="3" fill="#f0b030"/>
<path d="M9 282a2 2 0 1 1 3 2" fill="none" stroke="#7ab0ea" stroke-width=".8"/><rect x="12" y="284" width="4.500" height="4.500" rx="2" fill="#3f95ea"/>
<rect x="8" y="302" width="4.500" height="7" fill="#3f95ea"/><rect x="12.500" y="303" width="4.500" height="5" fill="#f0b030"/>
<g font-family="Liberation Sans" font-size="6.300" fill="#666" text-anchor="middle">
<text x="14" y="18.500">Home</text><text x="12" y="37.500">Task</text><text x="12" y="57">Back</text><text x="12" y="77">Up</text><text x="12" y="97">Down</text><text x="12" y="116.500">Left</text><text x="12" y="136.500">Right</text><text x="12" y="156.500">RES</text><text x="12" y="176">OFF</text><text x="12" y="195.500">Vol+</text><text x="12" y="215.500">Vol-</text><text x="12" y="235">Full</text><text x="12" y="254.500">Wall...</text><text x="12" y="274.500">Black</text><text x="12" y="294">.Get</text><text x="12" y="314">Rot ...</text>
</g>
</svg>

<!-- chat side dots -->
<svg class="a" style="left:681px;top:221px" width="16" height="319" viewBox="0 0 16 319">
<path d="M0 5h16M0 17h16M0 30h16M0 42h16M0 54h16M0 66h16" stroke="#f0f0f0" stroke-width=".6"/>
<circle cx="7" cy="11" r="2.200" fill="#1fae3c"/><circle cx="7" cy="23.500" r="2.200" fill="#f0901e"/><circle cx="7" cy="36" r="2.200" fill="#d6191f"/><circle cx="7" cy="48" r="2.200" fill="#5a41d8"/><circle cx="7" cy="60" r="2.200" fill="#18d49c"/>
<rect x="2" y="193" width="13" height="25" fill="#edf5fd"/>
<rect x="3" y="192" width="9" height="9" rx="1.500" fill="#2f8bec"/><path d="M5 195h5M5 198h5" stroke="#dff" stroke-width="1"/>
<rect x="3" y="204.500" width="9" height="9" rx="4.500" fill="#cfe2f8" stroke="#2f8bec" stroke-width=".7"/><path d="M5 207h5M5 209h5M5 211h5" stroke="#556" stroke-width=".8"/>
<path d="M0 286h16" stroke="#ececec"/>
<circle cx="7" cy="295" r="3.800" fill="#888"/><path d="M5.500 293.500l3 3M8.500 293.500l-3 3" stroke="#fff" stroke-width=".7"/>
<path d="M2 306h10v8H9l-2 1.600L5.500 314H2z" fill="#555"/><text x="7" y="312.500" font-size="5" font-weight="bold" text-anchor="middle" fill="#fff" font-family="Liberation Sans">AI</text>
</svg>

<div class="a" style="left:478px;top:540.500px;width:222px;height:1.500px;background:#555"></div>

<!-- right edge -->
<div class="a" style="left:987px;top:403px;width:13px;height:16px;background:#2f7fef;border-radius:6px 0 0 6px"></div>
<svg class="a" style="left:990px;top:407px" width="6" height="8"><path d="M4.500 1L1.500 4l3 3" fill="none" stroke="#fff" stroke-width="1.100"/></svg>
<div class="a" style="left:992px;top:470px;width:25px;height:25px;border-radius:50%;border:1px solid #3a8bef;background:linear-gradient(#f4f4f4 30%,#c4c4c4 75%)"></div>

</div>
</body>
</html>
